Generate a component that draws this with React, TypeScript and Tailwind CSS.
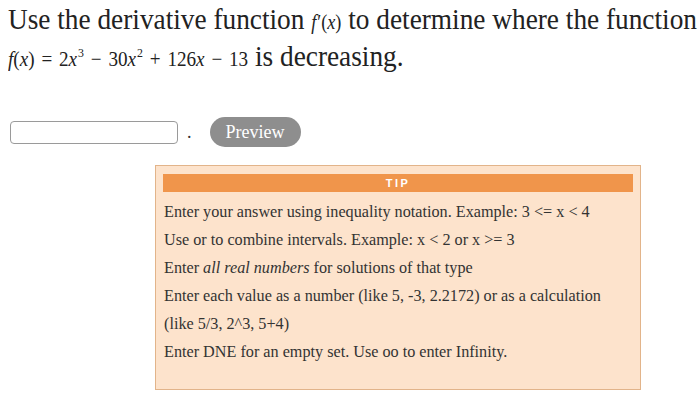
import React from 'react';

// small helpers for the inline math (KaTeX-ish look)
const V = ({ children }: { children: React.ReactNode }) => <span className="italic">{children}</span>;
const Op = ({ children }: { children: React.ReactNode }) => <span className="mx-[0.36em]">{children}</span>;

export default function App() {
    return (
        <div className="w-[700px] h-[399px] overflow-hidden bg-white text-[#222] font-['Liberation_Serif',serif]">
            {/* Question */}
            <div className="pl-2 pt-[2px]">
                <div className="whitespace-nowrap origin-left scale-x-[0.91] text-[30px] leading-[34px]">
                    Use the derivative function{' '}
                    <span className="text-[20px]">
                        <V>f</V>
                        <span className="ml-[1px]">′</span>(<V>x</V>)
                    </span>{' '}
                    to determine where the function
                </div>
                <div className="whitespace-nowrap origin-left scale-x-[0.91] text-[30px] leading-[34px]">
                    <span className="text-[21px]">
                        <V>f</V>(<V>x</V>)<Op>=</Op>2<V>x</V>
                        <sup className="text-[13px] ml-[1px] -top-[0.7em]">3</sup>
                        <Op>−</Op>30<V>x</V>
                        <sup className="text-[13px] ml-[1px] -top-[0.7em]">2</sup>
                        <Op>+</Op>126<V>x</V>
                        <Op>−</Op>13
                    </span>{' '}
                    is decreasing.
                </div>
            </div>

            {/* Answer row */}
            <div className="flex items-center mt-[41px] pl-[10px]">
                <input
                    type="text"
                    className="w-[168px] h-[23px] rounded-[4px] border border-[#9a9a9a] bg-white outline-none"
                />
                <span className="ml-[9px] text-[18px] leading-none text-[#333]">.</span>
                <button className="ml-[18px] w-[91px] h-[30px] rounded-full bg-[#8e8e8e] text-white text-[18px] font-['Liberation_Serif',serif]">
                    Preview
                </button>
            </div>

            {/* Tip box */}
            <div className="ml-[155px] mt-[18px] w-[486px] h-[225px] border border-[#e2b48a] bg-[#fde3cc] px-[7px] pt-[8px]">
                <div className="h-[18px] bg-[#f0954b] flex items-center justify-center text-white text-[11px] font-bold tracking-[0.22em] font-['Liberation_Sans',Arial,sans-serif]">
                    TIP
                </div>
                <div className="mt-[6px] pl-[1px] text-[16.2px] leading-[28px] text-[#333]">
                    <p>Enter your answer using inequality notation. Example: 3 &lt;= x &lt; 4</p>
                    <p>Use or to combine intervals. Example: x &lt; 2 or x &gt;= 3</p>
                    <p>
                        Enter <i>all real numbers</i> for solutions of that type
                    </p>
                    <p>Enter each value as a number (like 5, -3, 2.2172) or as a calculation</p>
                    <p>(like 5/3, 2^3, 5+4)</p>
                    <p>Enter DNE for an empty set. Use oo to enter Infinity.</p>
                </div>
            </div>
        </div>
    );
}
